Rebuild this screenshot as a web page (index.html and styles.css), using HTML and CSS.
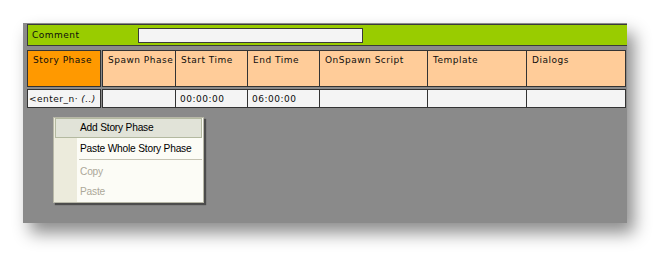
FILE: index.html
```html
<!DOCTYPE html>
<html>
<head>
<meta charset="utf-8">
<link rel="stylesheet" href="styles.css">
</head>
<body>
<div class="panel">
  <div class="commentbar">
    <span class="label">Comment</span>
    <div class="input"></div>
  </div>
  <div class="row head">
    <div class="cell c1 key">Story Phase</div>
    <div class="cell c2">Spawn Phase</div>
    <div class="cell c3">Start Time</div>
    <div class="cell c4">End Time</div>
    <div class="cell c5">OnSpawn Script</div>
    <div class="cell c6">Template</div>
    <div class="cell c7">Dialogs</div>
  </div>
  <div class="row data">
    <div class="cell c1 key">&lt;enter_n· <i>(..)</i></div>
    <div class="cell c2"></div>
    <div class="cell c3">00:00:00</div>
    <div class="cell c4">06:00:00</div>
    <div class="cell c5"></div>
    <div class="cell c6"></div>
    <div class="cell c7"></div>
  </div>
  <div class="menu">
    <div class="gutter"></div>
    <div class="item hl">Add Story Phase</div>
    <div class="item second">Paste Whole Story Phase</div>
    <div class="sep"></div>
    <div class="item dis copy">Copy</div>
    <div class="item dis last">Paste</div>
  </div>
</div>
</body>
</html>
```
FILE: styles.css
```css
html, body {
  margin: 0;
  padding: 0;
  background: #ffffff;
  width: 670px;
  height: 266px;
  overflow: hidden;
}
.panel {
  position: relative;
  margin: 23px 0 0 23px;
  width: 604px;
  height: 200px;
  background: #8a8a8a;
  box-shadow: 7px 10px 16px rgba(0, 0, 0, 0.45);
  font-family: "DejaVu Sans", sans-serif;
  font-size: 9px;
  letter-spacing: 0.5px;
  color: #0d0d0d;
}
.commentbar {
  margin-left: 4px;
  height: 20px;
  position: relative;
  top: 1px;
  background: #99cc00;
  border: 1px solid #3a3a3a;
  border-right: none;
  display: flex;
  align-items: center;
}
.label {
  padding-left: 4px;
  width: 106px;
}
.input {
  width: 223px;
  height: 13px;
  background: #f4f4f4;
  border: 1px solid #3a3a3a;
}
.row {
  display: flex;
  margin-left: 4px;
}
.head {
  margin-top: 5px;
  height: 37px;
}
.data {
  margin-top: 2px;
  height: 19px;
}
.cell {
  box-sizing: border-box;
  border: 1px solid #333333;
  margin-left: -1px;
  white-space: nowrap;
  overflow: hidden;
}
.cell.key {
  margin-left: 0;
  margin-right: 2px;
}
.head .cell {
  background: #ffcc99;
  padding: 4px 0 0 5px;
}
.head .cell.key {
  background: #ff9900;
}
.data .cell {
  background: #f4f4f4;
  padding: 0 0 0 4px;
  display: flex;
  align-items: center;
}
.data .cell.key {
  padding-left: 1px;
}
.data i {
  margin-left: 3px;
}
.c1 { width: 74px; }
.c2 { width: 74px; }
.c3 { width: 73px; }
.c4 { width: 73px; }
.c5 { width: 109px; }
.c6 { width: 100px; }
.c7 { width: 100px; }

.menu {
  position: absolute;
  left: 30px;
  top: 94px;
  width: 151px;
  height: 86px;
  box-sizing: border-box;
  background: #fcfcf6;
  border: 1px solid #b8b8a8;
  box-shadow: 2px 2px 1px rgba(0, 0, 0, 0.45);
  padding: 0 1px;
  font-family: "Liberation Sans", Arial, sans-serif;
  font-size: 10.2px;
  letter-spacing: -0.2px;
  color: #000000;
}
.gutter {
  position: absolute;
  left: 0;
  top: 0;
  bottom: 0;
  width: 23px;
  background: #ecebdc;
}
.item {
  position: relative;
  box-sizing: border-box;
  height: 20px;
  line-height: 18px;
  padding-left: 24px;
  border: 1px solid transparent;
  white-space: nowrap;
}
.item.hl {
  background: #e1e3d8;
  border-color: #b3b9a0;
}
.item.second {
  margin-top: 1px;
}
.sep {
  position: relative;
  height: 1px;
  margin-left: 24px;
  background: #c6c4b4;
}
.item.copy {
  margin-top: 2px;
}
.item.last {
  height: 19px;
}
.item.dis {
  color: #aca899;
}
```
